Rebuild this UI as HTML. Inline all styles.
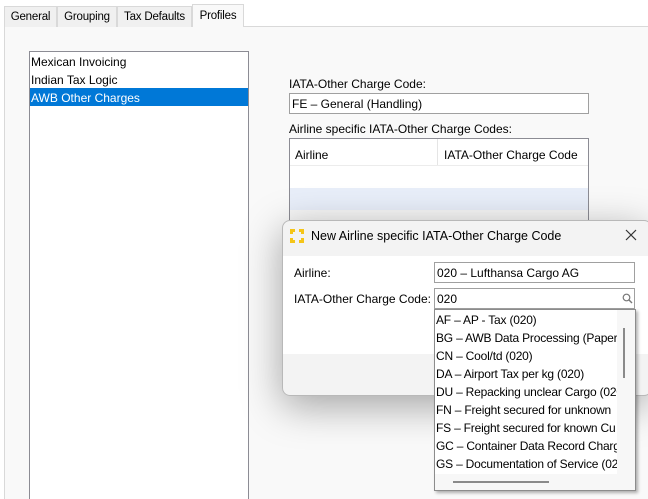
<!DOCTYPE html>
<html><head><style>
*{box-sizing:border-box;margin:0;padding:0}
html,body{width:648px;height:499px;overflow:hidden}
body{background:#fff;font-family:"Liberation Sans",sans-serif;font-size:12px;color:#000;position:relative}
.a{position:absolute}
.tab{position:absolute;top:6px;height:21px;background:#f0f0f0;border:1px solid #d9d9d9;border-bottom:none;padding:4px 0 0 0;text-align:center;white-space:nowrap;font-size:11.5px;letter-spacing:-0.2px}
.t{position:absolute;white-space:nowrap}
</style></head><body>
<div class="a" style="left:4px;top:26px;width:650px;height:480px;background:#f9f9f9;border:1px solid #d9d9d9"></div>
<div class="tab" style="left:4px;width:53px">General</div>
<div class="tab" style="left:57px;width:60px">Grouping</div>
<div class="tab" style="left:117px;width:75px">Tax Defaults</div>
<div class="tab" style="left:192px;top:4px;height:23px;width:52px;background:#f9f9f9;padding-top:5px">Profiles</div>
<div class="a" style="left:29px;top:51px;width:220px;height:460px;background:#fff;border:1px solid #8c8c94"></div>
<div class="t" style="left:31px;top:55px">Mexican Invoicing</div>
<div class="t" style="left:31px;top:73px">Indian Tax Logic</div>
<div class="a" style="left:30px;top:88px;width:218px;height:18px;background:#0078d7"></div>
<div class="t" style="left:31px;top:91px;color:#fff">AWB Other Charges</div>
<div class="t" style="left:289px;top:77px">IATA-Other Charge Code:</div>
<div class="a" style="left:289px;top:93px;width:300px;height:21px;background:#fff;border:1px solid #a0a0a0"></div>
<div class="t" style="left:292px;top:97px">FE – General (Handling)</div>
<div class="t" style="left:289px;top:122px">Airline specific IATA-Other Charge Codes:</div>
<div class="a" style="left:289px;top:138px;width:300px;height:100px;background:#fff;border:1px solid #8c8c94"></div>
<div class="a" style="left:437px;top:139px;width:1px;height:26px;background:#e5e5e5"></div>
<div class="a" style="left:290px;top:165px;width:298px;height:1px;background:#ececec"></div>
<div class="t" style="left:295px;top:148px">Airline</div>
<div class="t" style="left:444px;top:148px">IATA-Other Charge Code</div>
<div class="a" style="left:290px;top:188px;width:298px;height:22px;background:#e8eef9"></div>
<div class="a" style="left:290px;top:210px;width:298px;height:10px;background:#f6f6f6"></div>
<div class="a" style="left:282px;top:220px;width:366px;height:176px;border-radius:8px;box-shadow:0 10px 40px rgba(0,0,0,.35)"></div>
<div class="a" style="left:282px;top:220px;width:370px;height:176px;border-radius:8px;border:1px solid #b8b8b8;background:#f3f3f3;overflow:hidden">
 <div class="a" style="left:0;top:35px;width:370px;height:98px;background:#fff"></div>
</div>
<svg class="a" style="left:289px;top:228px" width="16" height="16" viewBox="0 0 16 16"><g fill="#f5c518"><rect x="1" y="1" width="5" height="3"/><rect x="1" y="1" width="3" height="5"/><rect x="10" y="1" width="5" height="3"/><rect x="12" y="1" width="3" height="5"/><rect x="1" y="12" width="5" height="3"/><rect x="1" y="10" width="3" height="5"/><rect x="10" y="12" width="5" height="3"/><rect x="12" y="10" width="3" height="5"/></g></svg>
<div class="t" style="left:311px;top:229px;font-size:12.5px">New Airline specific IATA-Other Charge Code</div>
<svg class="a" style="left:625px;top:229px" width="12" height="12"><path d="M1 1L11 11M11 1L1 11" stroke="#333" stroke-width="1.2"/></svg>
<div class="t" style="left:294px;top:266px">Airline:</div>
<div class="a" style="left:434px;top:262px;width:201px;height:21px;background:#fff;border:1px solid #a0a0a0"></div>
<div class="t" style="left:437px;top:266px">020 – Lufthansa Cargo AG</div>
<div class="t" style="left:294px;top:292px">IATA-Other Charge Code:</div>
<div class="a" style="left:434px;top:288px;width:201px;height:21px;background:#fff;border:1px solid #a0a0a0"></div>
<div class="t" style="left:437px;top:292px">020</div>
<svg class="a" style="left:622px;top:293px" width="11" height="11"><circle cx="4.5" cy="4.5" r="3.3" fill="none" stroke="#777" stroke-width="1.2"/><path d="M7 7L10 10" stroke="#777" stroke-width="1.4"/></svg>
<div class="a" style="left:434px;top:309px;width:202px;height:182px;background:#f7f7f7;border:1px solid #8c8c8c;box-shadow:2px 2px 3px rgba(0,0,0,.3);overflow:hidden">
 <div class="a" style="left:0;top:0;width:182px;height:164px;background:#fff"></div>
 <div class="a" style="left:188px;top:18px;width:2px;height:50px;background:#8a8a8a"></div>
 <div class="a" style="left:18px;top:171px;width:96px;height:2px;background:#8a8a8a"></div>
 <div class="a" style="left:1px;top:1px;width:181px;overflow:hidden;line-height:18px;white-space:nowrap;letter-spacing:-0.2px">
 AF – AP - Tax (020)<br>BG – AWB Data Processing (Paper<br>CN – Cool/td (020)<br>DA – Airport Tax per kg (020)<br>DU – Repacking unclear Cargo (020)<br>FN – Freight secured for unknown<br>FS – Freight secured for known Cu<br>GC – Container Data Record Charge<br>GS – Documentation of Service (020)
 </div>
</div>
</body></html>
